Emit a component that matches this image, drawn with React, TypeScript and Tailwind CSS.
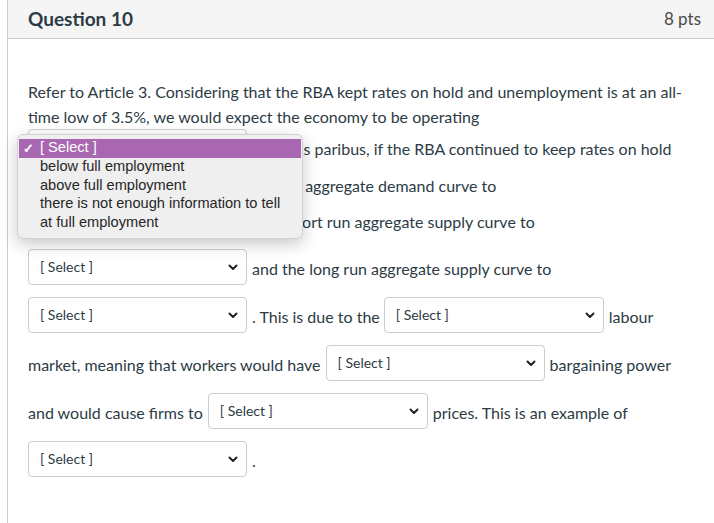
import React from 'react';

const Chevron = () => (
    <svg width="10" height="7" viewBox="0 0 10 7" className="text-[#222]">
        <path d="M1.5 1.5 L5 5 L8.5 1.5" fill="none" stroke="currentColor" strokeWidth="2" strokeLinecap="round" strokeLinejoin="round" />
    </svg>
);

const Select = ({ width = 'w-[219px]' }: { width?: string }) => (
    <div className={`${width} h-[36px] shrink-0 rounded-[4px] border border-[#c7cdd1] bg-white flex items-center justify-between pl-[11px] pr-[8px]`}>
        <span className="text-[14px] text-[#2d3b45] leading-[18px] -mt-[1px]">[ Select ]</span>
        <Chevron />
    </div>
);

const Row = ({ children, className = '' }: { children: React.ReactNode; className?: string }) => (
    <div className={`flex items-center whitespace-nowrap ${className}`}>{children}</div>
);

const Txt = ({ children }: { children: React.ReactNode }) => (
    <span className="pt-[4px] px-[5px]">{children}</span>
);

const options = ['below full employment', 'above full employment', 'there is not enough information to tell', 'at full employment'];

export default function App() {
    return (
        <div className="relative w-[714px] h-[523px] overflow-hidden bg-white pl-[7px]" style={{ fontFamily: 'Lato, "Noto Sans", sans-serif' }}>
            <div className="h-full border-l border-[#c7cdd1] text-[#2d3b45]">
                <div className="h-[39px] bg-[#f5f5f5] border-b border-[#c7cdd1] flex items-center justify-between pl-[20px] pr-[13px]">
                    <h2 className="text-[19px] font-bold">Question 10</h2>
                    <span className="text-[17px] text-[#4a4a4a]">8 pts</span>
                </div>

                <div className="pl-[20px] pt-[40px] text-[16px]">
                    <p className="leading-[25px] whitespace-nowrap">
                        Refer to Article 3. Considering that the RBA kept rates on hold and unemployment is at an all-
                        <br />
                        time low of 3.5%, we would expect the economy to be operating
                    </p>

                    <Row className="h-[36px]">
                        <Select />
                        <span className="pt-[4px] pl-[6px] pr-[5px]">. Ceteris paribus, if the RBA continued to keep rates on hold</span>
                    </Row>
                    <Row className="h-[38px]">
                        <Select />
                        <span className="pt-[4px] pl-[1px]">and the aggregate demand curve to</span>
                    </Row>
                    <Row className="h-[34px]">
                        <Select />
                        <span className="pt-[4px] pl-[12px]">the short run aggregate supply curve to</span>
                    </Row>
                    <Row className="h-[36px] mt-[12px]">
                        <Select />
                        <Txt>and the long run aggregate supply curve to</Txt>
                    </Row>
                    <Row className="h-[36px] mt-[12px]">
                        <Select />
                        <span className="pt-[4px] pl-[5px] pr-[4px]">. This is due to the</span>
                        <Select width="w-[220px]" />
                        <Txt>labour</Txt>
                    </Row>
                    <Row className="h-[36px] mt-[12px]">
                        <span className="pt-[4px] pr-[5px]">market, meaning that workers would have</span>
                        <Select />
                        <Txt>bargaining power</Txt>
                    </Row>
                    <Row className="h-[36px] mt-[12px]">
                        <span className="pt-[4px] pr-[5px]">and would cause firms to</span>
                        <Select width="w-[220px]" />
                        <Txt>prices. This is an example of</Txt>
                    </Row>
                    <Row className="h-[36px] mt-[12px]">
                        <Select />
                        <Txt>.</Txt>
                    </Row>
                </div>
            </div>

            {/* open native option list */}
            <div
                className="absolute left-[17px] top-[134px] w-[286px] rounded-[6px] border border-[#d2d2d2] bg-[#efefef] shadow-[0_5px_16px_rgba(0,0,0,0.22)] pt-[4px] pb-[6px] px-[1px] text-[14.6px] text-[#262626]"
                style={{ fontFamily: '"Liberation Sans", Arial, sans-serif' }}
            >
                <div className="h-[18.7px] bg-[#a966b1] text-white flex items-center">
                    <span className="w-[21px] pl-[4px] text-[13px] font-bold">✓</span>
                    <span>[ Select ]</span>
                </div>
                {options.map((o) => (
                    <div key={o} className="h-[18.7px] flex items-center pl-[21px]">{o}</div>
                ))}
            </div>
        </div>
    );
}
